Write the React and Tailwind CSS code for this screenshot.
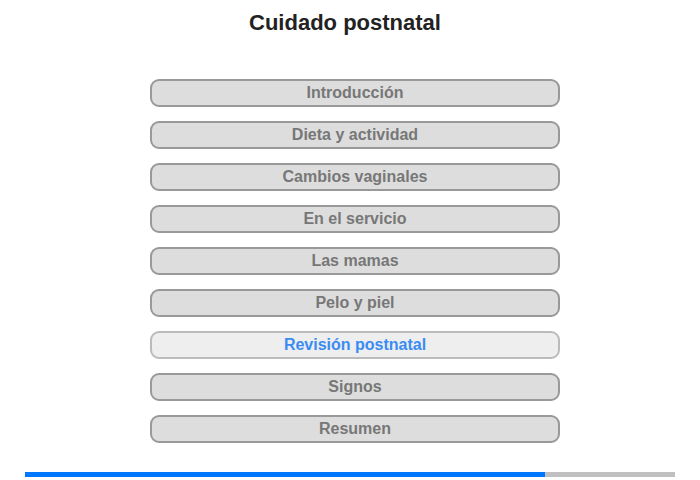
import React from "react"

const sections = [
  "Introducción",
  "Dieta y actividad",
  "Cambios vaginales",
  "En el servicio",
  "Las mamas",
  "Pelo y piel",
  "Revisión postnatal",
  "Signos",
  "Resumen",
]

const active = "Revisión postnatal"

export default function App() {
  return (
    <div className="w-[700px] h-[480px] bg-white font-['Liberation_Sans',Arial,sans-serif] overflow-hidden">
      {/* Title */}
      <h1 className="pt-[9px] pr-[10px] h-[79px] text-center text-[22px] leading-[28px] font-bold text-[#222]">
        Cuidado postnatal
      </h1>

      {/* Section list */}
      <div className="flex flex-col pl-[150px] gap-[14px]">
        {sections.map((s) => (
          <button
            key={s}
            className={`w-[410px] h-[28px] rounded-[9px] border-2 text-[16px] font-bold leading-none ${
              s === active
                ? "bg-[#eeeeee] border-[#bbbbbb] text-[#3a8cf2]"
                : "bg-[#dddddd] border-[#999999] text-[#777777]"
            }`}
          >
            {s}
          </button>
        ))}
      </div>

      {/* Progress */}
      <div className="mx-[25px] mt-[29px] h-[5px] bg-[#c0c0c0] flex">
        <div className="w-[80%] h-full bg-[#0077ff]" />
      </div>
    </div>
  )
}
